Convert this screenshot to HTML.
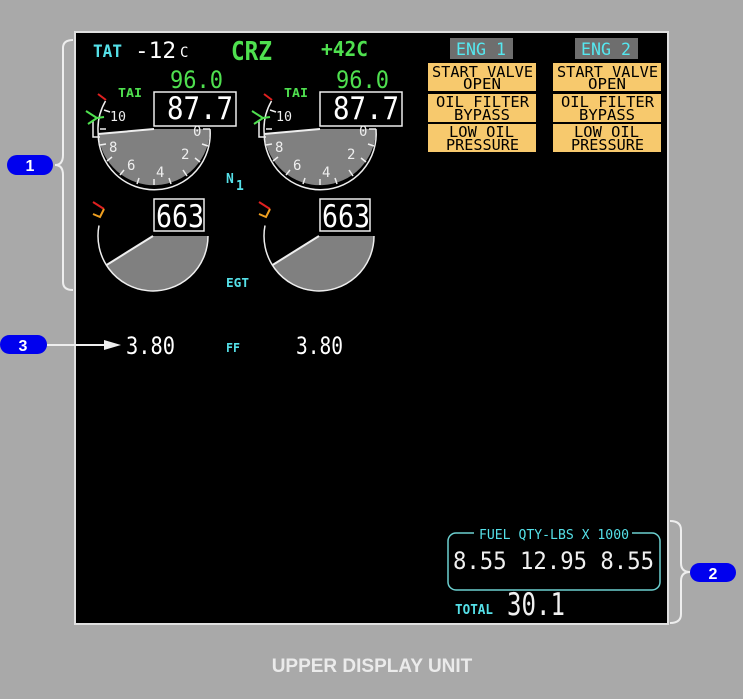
<!DOCTYPE html>
<html><head><meta charset="utf-8"><style>
body{margin:0;background:#a9a9a9;width:743px;height:699px;overflow:hidden}
svg{position:absolute;left:0;top:0}
</style></head><body>
<svg width="743" height="699" viewBox="0 0 743 699" xmlns="http://www.w3.org/2000/svg" font-family="DejaVu Sans Mono, Liberation Mono, monospace">
<rect x="75" y="32" width="593" height="592" fill="#000" stroke="#e0e0e0" stroke-width="2"/>
<path d="M73 40 Q63 40 63 48 L63 155 Q63 165 55 165 Q63 165 63 175 L63 282 Q63 290 73 290" fill="none" stroke="#eee" stroke-width="2"/>
<path d="M670 521 Q681 521 681 530 L681 563 Q681 572 690 572 Q681 572 681 581 L681 614 Q681 623 670 623" fill="none" stroke="#eee" stroke-width="2"/>
<rect x="7" y="155" width="46" height="20" rx="10" fill="#0000ee"/>
<text x="30" y="171" fill="#fff" font-weight="bold" font-size="16" text-anchor="middle" font-family="Liberation Sans">1</text>
<rect x="0" y="335" width="47" height="19" rx="9.5" fill="#0000ee"/>
<text x="23" y="351" fill="#fff" font-weight="bold" font-size="16" text-anchor="middle" font-family="Liberation Sans">3</text>
<rect x="690" y="563" width="46" height="19" rx="9.5" fill="#0000ee"/>
<text x="713" y="579" fill="#fff" font-weight="bold" font-size="16" text-anchor="middle" font-family="Liberation Sans">2</text>
<line x1="47" y1="345" x2="108" y2="345" stroke="#eee" stroke-width="2"/>
<path d="M104 340 L121 345 L104 350 Z" fill="#eee"/>
<text x="93" y="57" fill="#55e0e8" font-size="17" font-weight="bold" textLength="29" lengthAdjust="spacingAndGlyphs">TAT</text>
<text x="135" y="58" fill="#fff" font-size="22" textLength="41" lengthAdjust="spacingAndGlyphs">-12</text>
<text x="180" y="57" fill="#fff" font-size="14">C</text>
<text x="231" y="60" fill="#4fe04f" font-size="26" font-weight="bold" textLength="41" lengthAdjust="spacingAndGlyphs">CRZ</text>
<text x="321" y="56" fill="#4fe04f" font-size="20" font-weight="bold" textLength="47" lengthAdjust="spacingAndGlyphs">+42C</text>
<g id="g1">
<text x="170" y="88" fill="#4fe04f" font-size="24" textLength="53" lengthAdjust="spacingAndGlyphs">96.0</text>
<text x="118" y="97" fill="#4fe04f" font-size="12" font-weight="bold" textLength="24" lengthAdjust="spacingAndGlyphs">TAI</text>
<path d="M154 129 L210 129 A56 56 0 0 1 98.2 133.9 Z" fill="#808080"/>
<path d="M210 129 A56 56 0 1 1 98.2 133.9" fill="none" stroke="#eee" stroke-width="1.5"/>
<path d="M98.2 133.9 A56 56 0 0 1 105.5 101" fill="none" stroke="#eee" stroke-width="1.5"/>
<line x1="98" y1="134" x2="154" y2="129" stroke="#eee" stroke-width="2"/>
<path d="M93 120 L93 137 L100 137 M100 129 L106 129 M104 110 L110 112" stroke="#eee" stroke-width="1.5" fill="none"/>
<path d="M98 94 L106 100" stroke="#e02020" stroke-width="2"/>
<path d="M86 111 L97 118 L88 124 M97 118 L104 117" stroke="#4fe04f" stroke-width="2" fill="none"/>
<g stroke="#eee" stroke-width="1.5">
<line x1="210" y1="129" x2="203" y2="129"/><line x1="208" y1="146" x2="202" y2="144"/>
<line x1="200" y1="162" x2="195" y2="158"/><line x1="187" y1="176" x2="183" y2="170"/>
<line x1="171" y1="184" x2="169" y2="178"/><line x1="154" y1="185" x2="154" y2="179"/>
<line x1="137" y1="184" x2="139" y2="178"/><line x1="120" y1="175" x2="124" y2="170"/>
<line x1="107" y1="161" x2="112" y2="157"/><line x1="100" y1="145" x2="106" y2="144"/>
</g>
<g fill="#eee" font-size="14">
<text x="193" y="136">0</text><text x="181" y="159">2</text><text x="156" y="177">4</text>
<text x="127" y="170">6</text><text x="109" y="152">8</text><text x="110" y="121" font-size="13" textLength="16" lengthAdjust="spacingAndGlyphs">10</text>
</g>
<rect x="154" y="92" width="82" height="34" fill="#000" stroke="#eee" stroke-width="1.5"/>
<text x="167" y="119" fill="#fff" font-size="31" textLength="66" lengthAdjust="spacingAndGlyphs">87.7</text>
<path d="M153 236 L208 236 A55 55 0 0 1 106.4 265.1 Z" fill="#808080"/>
<path d="M208 236 A55 55 0 1 1 99 225.5" fill="none" stroke="#eee" stroke-width="1.5"/>
<line x1="106.4" y1="265.1" x2="153" y2="236" stroke="#eee" stroke-width="2"/>
<path d="M93 202 L104 209" stroke="#e02020" stroke-width="2"/>
<path d="M104 209 L100 217 L93 214" stroke="#f0a020" stroke-width="2" fill="none"/>
<rect x="154" y="199" width="50" height="32" fill="#000" stroke="#eee" stroke-width="1.5"/>
<text x="156" y="227" fill="#fff" font-size="31" textLength="48" lengthAdjust="spacingAndGlyphs">663</text>
</g>
<use href="#g1" x="166"/>
<text x="226" y="183" fill="#55e0e8" font-size="13" font-weight="bold">N</text>
<text x="236" y="190" fill="#55e0e8" font-size="13" font-weight="bold">1</text>
<text x="226" y="287" fill="#55e0e8" font-size="12" font-weight="bold" textLength="23" lengthAdjust="spacingAndGlyphs">EGT</text>
<text x="126" y="354" fill="#fff" font-size="24" textLength="49" lengthAdjust="spacingAndGlyphs">3.80</text>
<text x="226" y="352" fill="#55e0e8" font-size="12" font-weight="bold" textLength="14" lengthAdjust="spacingAndGlyphs">FF</text>
<text x="296" y="354" fill="#fff" font-size="24" textLength="47" lengthAdjust="spacingAndGlyphs">3.80</text>
<rect x="450" y="38" width="63" height="21" fill="#6e6e6e"/>
<text x="456" y="55" fill="#55e8f0" font-size="17" textLength="50" lengthAdjust="spacingAndGlyphs">ENG 1</text>
<rect x="575" y="38" width="63" height="21" fill="#6e6e6e"/>
<text x="581" y="55" fill="#55e8f0" font-size="17" textLength="50" lengthAdjust="spacingAndGlyphs">ENG 2</text>
<g id="w1" font-size="15" fill="#000" lengthAdjust="spacingAndGlyphs">
<rect x="428" y="63" width="108" height="28" fill="#f7c96d"/>
<text x="432" y="77" textLength="101" lengthAdjust="spacingAndGlyphs">START VALVE</text><text x="463" y="89" textLength="38" lengthAdjust="spacingAndGlyphs">OPEN</text>
<rect x="428" y="94" width="108" height="28" fill="#f7c96d"/>
<text x="436" y="107" textLength="93" lengthAdjust="spacingAndGlyphs">OIL FILTER</text><text x="454" y="120" textLength="56" lengthAdjust="spacingAndGlyphs">BYPASS</text>
<rect x="428" y="124" width="108" height="28" fill="#f7c96d"/>
<text x="449" y="137" textLength="65" lengthAdjust="spacingAndGlyphs">LOW OIL</text><text x="446" y="150" textLength="73" lengthAdjust="spacingAndGlyphs">PRESSURE</text>
</g>
<use href="#w1" x="125"/>
<rect x="448" y="533" width="212" height="57" rx="8" fill="none" stroke="#6cd0d0" stroke-width="1.5"/>
<rect x="474" y="527" width="158" height="12" fill="#000"/>
<text x="479" y="539" fill="#55e0e8" font-size="13" textLength="150" lengthAdjust="spacingAndGlyphs">FUEL QTY-LBS X 1000</text>
<text x="453" y="569" fill="#f0f0f0" font-size="24" textLength="201" lengthAdjust="spacingAndGlyphs">8.55 12.95 8.55</text>
<text x="455" y="614" fill="#55e0e8" font-size="13" font-weight="bold" textLength="38" lengthAdjust="spacingAndGlyphs">TOTAL</text>
<text x="507" y="615" fill="#f0f0f0" font-size="31" textLength="58" lengthAdjust="spacingAndGlyphs">30.1</text>
<text x="372" y="672" fill="#ebebeb" font-size="19" font-weight="bold" text-anchor="middle" font-family="Liberation Sans, sans-serif">UPPER DISPLAY UNIT</text>
</svg>
</body></html>
